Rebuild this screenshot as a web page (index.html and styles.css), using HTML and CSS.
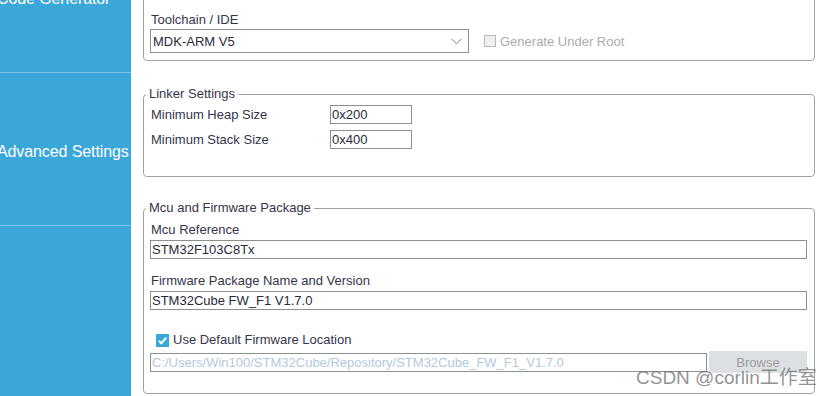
FILE: index.html
```html
<!DOCTYPE html>
<html lang="en">
<head>
    <meta charset="UTF-8">
    <title>Project Manager</title>
    <link rel="stylesheet" href="styles.css">
</head>
<body>
<div class="app">
    <aside class="sidebar">
        <div class="nav-item first">Code Generator</div>
        <div class="nav-item">Advanced Settings</div>
        <div class="nav-item last"></div>
    </aside>

    <main class="content">
        <div class="box toolchain">
            <div class="label">Toolchain / IDE</div>
            <div class="toolchain-row">
                <div class="select">
                    <span>MDK-ARM V5</span>
                    <svg width="11" height="7" viewBox="0 0 11 7"><path d="M0.5 0.8 L5.5 5.8 L10.5 0.8" fill="none" stroke="#7a7a7a" stroke-width="1"/></svg>
                </div>
                <span class="check off"></span>
                <span class="check-text muted">Generate Under Root</span>
            </div>
        </div>

        <fieldset class="box group linker">
            <legend>Linker Settings</legend>
            <div class="row">
                <span class="row-label">Minimum Heap Size</span>
                <span class="field short">0x200</span>
            </div>
            <div class="row">
                <span class="row-label">Minimum Stack Size</span>
                <span class="field short">0x400</span>
            </div>
        </fieldset>

        <fieldset class="box group mcu">
            <legend>Mcu and Firmware Package</legend>
            <div class="label first-label">Mcu Reference</div>
            <div class="field wide">STM32F103C8Tx</div>
            <div class="label second-label">Firmware Package Name and Version</div>
            <div class="field wide">STM32Cube FW_F1 V1.7.0</div>
            <div class="check-row">
                <span class="check on">
                    <svg width="13" height="13" viewBox="0 0 13 13"><path d="M2.8 6.6 L5.3 9.2 L10.3 3.6" fill="none" stroke="#fff" stroke-width="2"/></svg>
                </span>
                <span class="check-text">Use Default Firmware Location</span>
            </div>
            <div class="path-row">
                <span class="field path">C:/Users/Win100/STM32Cube/Repository/STM32Cube_FW_F1_V1.7.0</span>
                <span class="browse">Browse</span>
            </div>
        </fieldset>
    </main>
</div>

<div class="watermark">CSDN @corlin工作室</div>
</body>
</html>
```
FILE: styles.css
```css
body {
  margin: 0;
  width: 830px;
  height: 396px;
  overflow: hidden;
  background: #fff;
  font-family: "Liberation Sans", Arial, sans-serif;
  font-size: 13px;
  color: #35354a;
}

.app {
  display: flex;
  height: 396px;
}

.sidebar {
  width: 131px;
  flex: none;
  background: #3aa7d9;
  color: #fff;
  font-size: 16px;
  overflow: hidden;
}

.nav-item {
  height: 153px;
  box-sizing: border-box;
  border-bottom: 1px solid #7dc4e8;
  display: flex;
  align-items: center;
  padding-top: 6px;
  white-space: nowrap;
  text-indent: -3px;
  letter-spacing: -0.1px;
}

.nav-item.first {
  margin-top: -80px;
}

.nav-item.last {
  border-bottom: none;
}

.content {
  flex: 1;
  padding: 0 15px 0 12px;
}

.box {
  border: 1px solid #a2a2a2;
  border-radius: 4px;
  padding: 0 7px 0 6px;
  margin: 0;
}

.toolchain {
  margin-top: -20px;
  padding-top: 31px;
  padding-bottom: 7px;
  border-top-left-radius: 0;
  border-top-right-radius: 0;
}

.label {
  line-height: 16px;
  padding-left: 1px;
}

.toolchain-row {
  display: flex;
  align-items: center;
  margin-top: 1px;
}

.select {
  width: 319px;
  height: 24px;
  box-sizing: border-box;
  border: 1px solid #8f8f8f;
  display: flex;
  align-items: center;
  justify-content: space-between;
  padding: 0 6px 0 2px;
  color: #2a2a3a;
}

.check {
  width: 13px;
  height: 13px;
  box-sizing: border-box;
  flex: none;
  display: inline-flex;
}

.check.off {
  margin-left: 15px;
  border: 1px solid #b9b9b9;
  background: #eef0f2;
  width: 12px;
  height: 12px;
}

.check.on {
  background: #3aa7d9;
}

.check-text {
  margin-left: 4px;
}

.muted {
  color: #ababab;
}

.group legend {
  font-size: 13px;
  line-height: 16px;
  padding: 0 3px 0 3px;
  margin-left: -4px;
}

.linker {
  margin-top: 25px;
  padding-bottom: 27px;
}

.row {
  display: flex;
  align-items: center;
  margin-top: 3px;
}

.row + .row {
  margin-top: 6px;
}

.row-label {
  width: 179px;
  padding-left: 1px;
}

.field {
  border: 1px solid #8f8f8f;
  height: 19px;
  box-sizing: border-box;
  line-height: 17px;
  padding-left: 1px;
  color: #2a2a3a;
  white-space: nowrap;
}

.field.short {
  width: 82px;
}

.mcu {
  margin-top: 23px;
  padding-bottom: 20px;
}

.first-label {
  margin-top: 6px;
}

.second-label {
  margin-top: 14px;
}

.label + .field {
  margin-top: 2px;
}

.check-row {
  display: flex;
  align-items: center;
  margin-top: 22px;
  padding-left: 6px;
  line-height: 16px;
}

.path-row {
  display: flex;
  align-items: center;
  gap: 2px;
  margin-top: 3px;
  height: 22px;
}

.field.path {
  flex: 1;
  color: #b4c8de;
  overflow: hidden;
}

.browse {
  width: 98px;
  height: 22px;
  background: #dde0e3;
  color: #9d9d9d;
  display: flex;
  align-items: center;
  justify-content: center;
}

.watermark {
  position: absolute;
  left: 636px;
  top: 362px;
  font-family: "Liberation Sans", "Noto Sans CJK SC", sans-serif;
  font-size: 19px;
  color: rgba(110, 110, 110, 0.75);
  white-space: nowrap;
}
```
